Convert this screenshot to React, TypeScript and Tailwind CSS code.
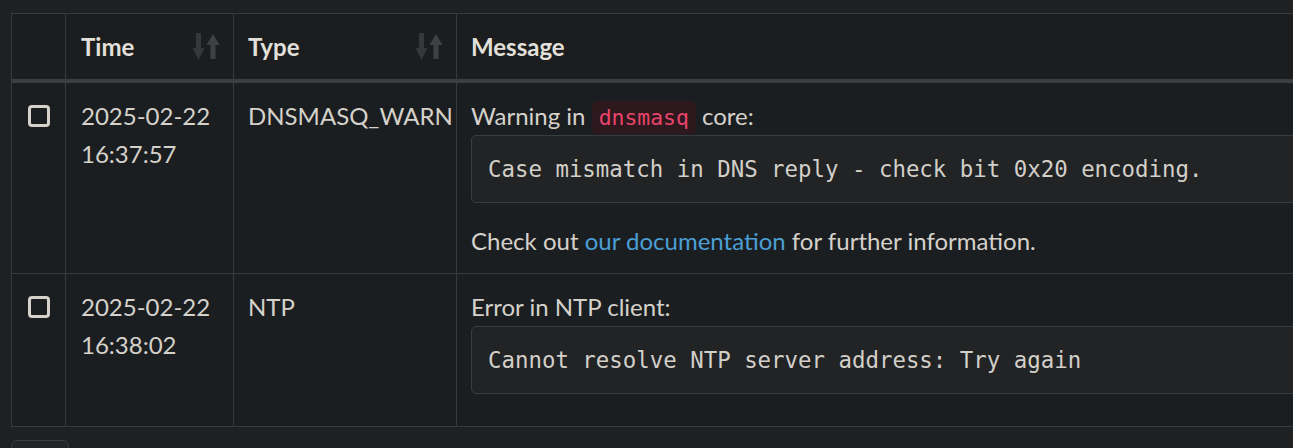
import React from "react";

const sans = "font-['Lato','Noto_Sans',sans-serif]";
const mono = "font-['DejaVu_Sans_Mono','Liberation_Mono',monospace]";

function SortIcon() {
  return (
    <svg width="27" height="28" viewBox="0 0 27 28" aria-hidden="true">
      <rect x="3" y="0" width="5" height="17" fill="#35383a" />
      <polygon points="-0.5,15 11.5,15 5.5,27" fill="#35383a" />
      <polygon points="13.5,12 26.5,12 20,1" fill="#3e4143" />
      <rect x="17.5" y="10" width="5" height="16" fill="#3e4143" />
    </svg>
  );
}

function Checkbox() {
  return <div className="h-[22px] w-[22px] rounded-[4px] border-[3px] border-[#d6d1c9]" />;
}

const rows = [
  {
    date: "2025-02-22",
    time: "16:37:57",
    type: "DNSMASQ_WARN",
    intro: (
      <>
        Warning in{" "}
        <code className={`${mono} inline-block rounded-[5px] bg-[#2d181e] px-[7px] py-[4px] text-[21.4px] leading-[25px] text-[#e8456b]`}>
          dnsmasq
        </code>{" "}
        core:
      </>
    ),
    code: "Case mismatch in DNS reply - check bit 0x20 encoding.",
    footer: true,
  },
  {
    date: "2025-02-22",
    time: "16:38:02",
    type: "NTP",
    intro: <>Error in NTP client:</>,
    code: "Cannot resolve NTP server address: Try again",
    footer: false,
  },
];

export default function App() {
  return (
    <div className={`${sans} h-[448px] w-full overflow-hidden bg-[#1e2022] pl-[11px] pt-[13px] text-[24px] leading-[38px] text-[#d5d1cb]`}>
      <div className="w-[1340px] border border-[#383b3e] bg-[#1b1d1f]">
        <div className="flex h-[69px] border-b-4 border-[#3c3f42] font-bold text-[#e3e0db]">
          <div className="w-[54px] shrink-0 border-r border-[#383b3e]" />
          <div className="flex w-[168px] shrink-0 items-center justify-between border-r border-[#383b3e] pl-[15px] pr-[13px]">
            <span>Time</span>
            <SortIcon />
          </div>
          <div className="flex w-[223px] shrink-0 items-center justify-between border-r border-[#383b3e] pl-[14px] pr-[13px]">
            <span>Type</span>
            <SortIcon />
          </div>
          <div className="flex flex-1 items-center px-[14px]">Message</div>
        </div>
        {rows.map((r, i) => (
          <div key={i} className={`flex bg-[#1b1e20] ${i < rows.length - 1 ? "border-b border-[#383b3e]" : ""}`}>
            <div className="flex w-[54px] shrink-0 justify-center border-r border-[#383b3e] pt-[22px]">
              <Checkbox />
            </div>
            <div className="w-[168px] shrink-0 border-r border-[#383b3e] pl-[15px] pt-[14px]">
              <div>{r.date}</div>
              <div>{r.time}</div>
            </div>
            <div className="w-[223px] shrink-0 border-r border-[#383b3e] pl-[14px] pt-[14px]">{r.type}</div>
            <div className="flex-1 px-[14px] pb-[13px] pt-[14px]">
              <div>{r.intro}</div>
              <pre className={`${mono} mb-[19px] rounded-[5px] border border-[#3a3d40] bg-[#212325] px-[16px] py-[17px] text-[22.4px] leading-[32px] text-[#d3cfc9]`}>
                {r.code}
              </pre>
              {r.footer && (
                <div>
                  Check out <span className="text-[#4b9fd5]">our documentation</span> for further information.
                </div>
              )}
            </div>
          </div>
        ))}
      </div>
      <div className="mt-[13px] h-[40px] w-[58px] rounded-[6px] border border-[#3a3d40] bg-[#222527]" />
    </div>
  );
}
